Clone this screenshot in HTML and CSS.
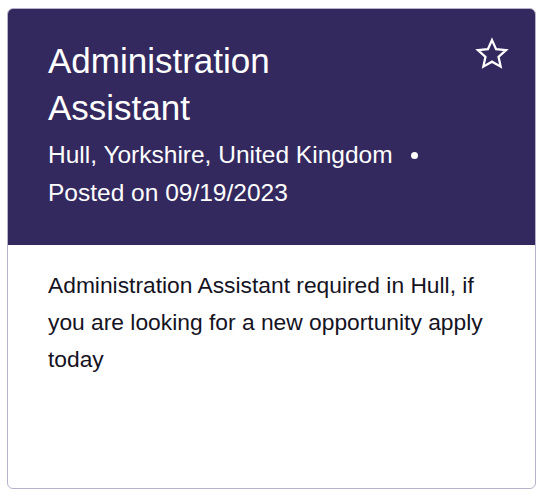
FILE: index.html
```html
<!DOCTYPE html>
<html lang="en">
<head>
<meta charset="utf-8">
<title>Job card</title>
<link rel="stylesheet" href="styles.css">
</head>
<body>
  <article class="card">
    <header class="card-header">
      <div class="header-text">
        <h2 class="title">Administration Assistant</h2>
        <p class="meta">
          <span class="location">Hull, Yorkshire, United Kingdom</span><span class="dot" aria-hidden="true"></span>
          <span class="posted">Posted on 09/19/2023</span>
        </p>
      </div>
      <button class="fav" type="button" aria-label="Save job">
        <svg viewBox="0 0 24 24" width="34" height="34" fill="none" stroke="#ffffff" stroke-width="1.6" stroke-linejoin="miter">
          <path d="M12 2.2l2.9 6.4 7 .7-5.3 4.7 1.5 6.9L12 17.4l-6.1 3.5 1.5-6.9L2.1 9.3l7-.7z"/>
        </svg>
      </button>
    </header>
    <div class="card-body">
      <p class="desc">Administration Assistant required in Hull, if you are looking for a new opportunity apply today</p>
    </div>
  </article>
</body>
</html>
```
FILE: styles.css
```css
html, body {
  margin: 0;
  padding: 0;
  background: #ffffff;
}
body {
  padding: 8px 7px 12px 7px;
  font-family: "Liberation Sans", Arial, sans-serif;
}
.card {
  box-sizing: border-box;
  height: 481px;
  border: 1px solid #b7b2cb;
  border-radius: 6px;
  overflow: hidden;
  display: flex;
  flex-direction: column;
  background: #ffffff;
}
.card-header {
  background: #33295e;
  color: #ffffff;
  padding: 28px 26px 33px 40px;
  display: flex;
  justify-content: space-between;
  align-items: flex-start;
}
.header-text {
  flex: 1;
}
.title {
  margin: 0;
  font-size: 35px;
  line-height: 47px;
  font-weight: 400;
  max-width: 330px;
}
.meta {
  margin: 5px 0 0 0;
  font-size: 24.5px;
  line-height: 38px;
  max-width: 400px;
}
.dot {
  display: inline-block;
  width: 7px;
  height: 7px;
  border-radius: 50%;
  background: #ffffff;
  margin-left: 18px;
  vertical-align: 4px;
}
.fav {
  background: none;
  border: 0;
  padding: 0;
  margin: 0;
  width: 34px;
  height: 34px;
  cursor: pointer;
  display: flex;
}
.card-body {
  padding: 22px 40px;
}
.desc {
  margin: 0;
  font-size: 22.8px;
  line-height: 37px;
  color: #15131f;
}
```
